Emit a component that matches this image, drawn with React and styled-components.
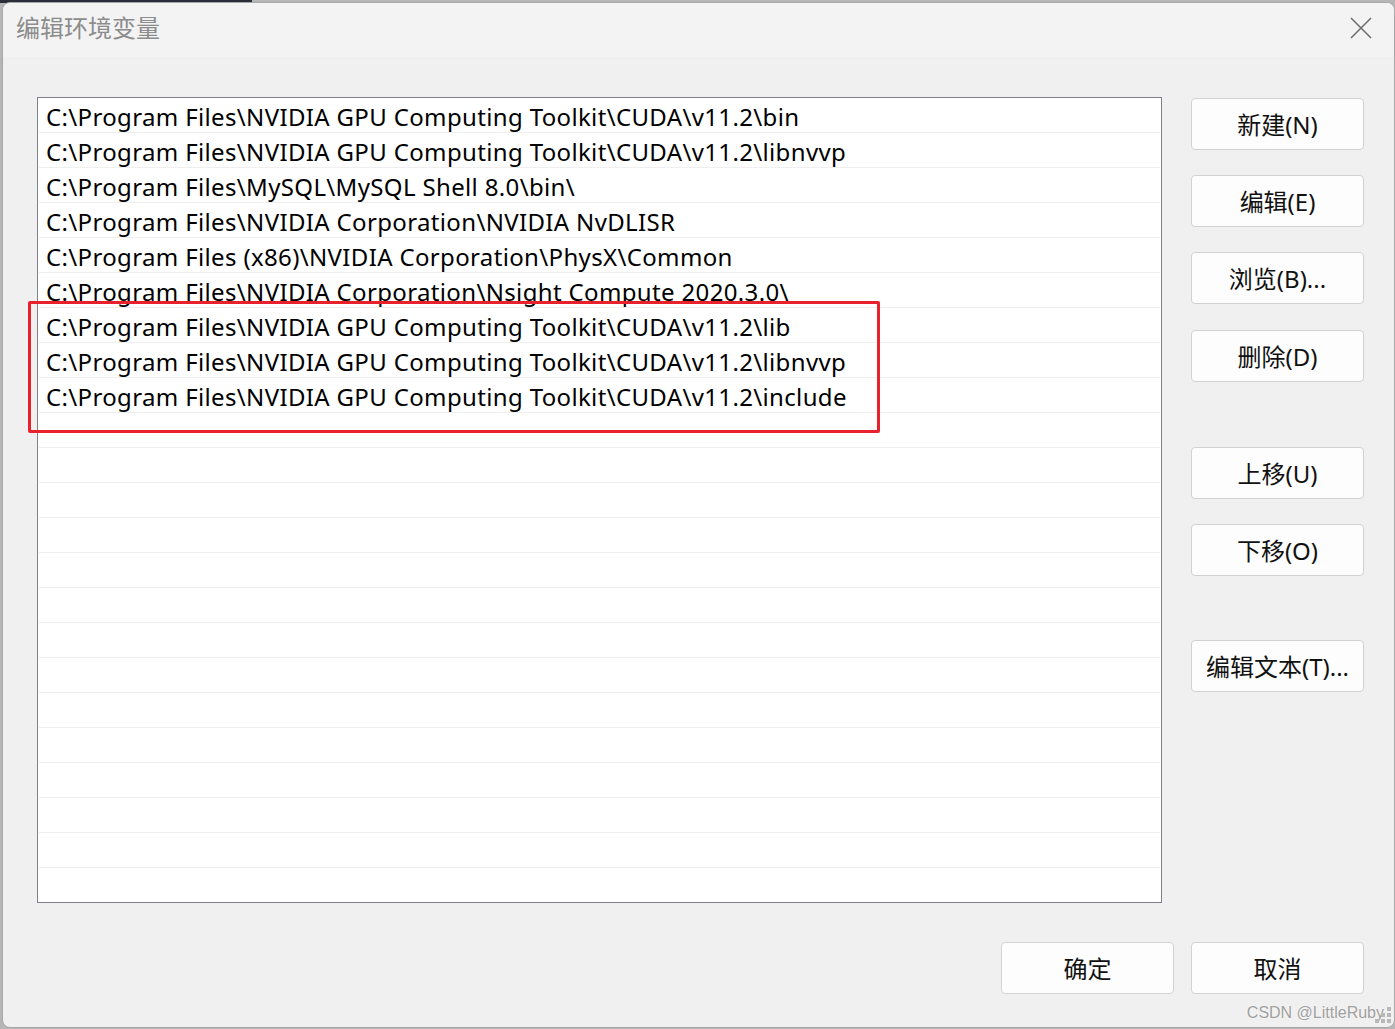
import React from "react";
import styled, { createGlobalStyle } from "styled-components";

const Global = createGlobalStyle`
  html, body { margin: 0; padding: 0; }
  body {
    width: 1395px;
    height: 1029px;
    overflow: hidden;
    background:
      linear-gradient(#2c2d3a, #2c2d3a) 0 0 / 252px 3px no-repeat,
      #b6b6b6;
    font-family: "Noto Sans", "Noto Sans CJK SC", sans-serif;
  }
`;

const Window = styled.div`
  position: relative;
  box-sizing: border-box;
  margin: 2px 0 0 2px;
  width: 1393px;
  height: 1026px;
  background: #f0f0f0;
  border: 1px solid #a8a8a8;
  border-radius: 8px;
  overflow: hidden;
  display: flex;
  flex-direction: column;
`;

const TitleBar = styled.div`
  height: 54px;
  flex: none;
  background: #f3f3f3;
  display: flex;
  align-items: center;
  justify-content: space-between;
  padding: 0 22px 0 13px;
`;

const Title = styled.div`
  font-family: "Noto Sans CJK SC", sans-serif;
  font-size: 24px;
  color: #8c8c8c;
  margin-top: -8px;
`;

const Close = styled.div`
  width: 22px;
  height: 22px;
  display: flex;
  margin-top: -4px;
`;

const Main = styled.div`
  display: flex;
  gap: 29px;
  padding: 40px 0 0 34px;
`;

const List = styled.div`
  box-sizing: border-box;
  width: 1125px;
  height: 806px;
  background: #fff;
  border: 1px solid #82828c;
  padding: 0 1px;
  overflow: hidden;
`;

const Row = styled.div`
  box-sizing: border-box;
  height: 35px;
  border-bottom: 1px solid #efefef;
  padding-left: 7px;
  padding-top: 3px;
  display: flex;
  align-items: center;
  font-size: 24px;
  color: #000;
  white-space: nowrap;
  letter-spacing: 0.35px;
  line-height: 1;
`;

const Side = styled.div`
  display: flex;
  flex-direction: column;
  padding-top: 1px;
`;

const Button = styled.div`
  box-sizing: border-box;
  width: 173px;
  height: 52px;
  flex: none;
  margin-top: ${(p) => p.$top || 0}px;
  background: #fdfdfd;
  border: 1px solid #d2d2d2;
  border-radius: 4px;
  display: flex;
  align-items: center;
  justify-content: center;
  font-size: 24px;
  color: #111;
  font-family: "Noto Sans", "Noto Sans CJK SC", sans-serif;
  white-space: nowrap;
  padding-bottom: 2px;
`;

const Footer = styled.div`
  display: flex;
  justify-content: flex-end;
  gap: 17px;
  padding: 0 30px 0 0;
  margin-top: 39px;
`;

const Highlight = styled.div`
  position: absolute;
  left: 25px;
  top: 298px;
  width: 852px;
  height: 132px;
  box-sizing: border-box;
  border: 3px solid #e8222c;
  border-radius: 2px;
  pointer-events: none;
`;

const Watermark = styled.div`
  position: absolute;
  right: 10px;
  bottom: 5px;
  font-family: "Liberation Sans", Arial, sans-serif;
  font-size: 16px;
  color: #a0a0a0;
  text-shadow: 0 0 2px #fff;
`;

const Grip = styled.svg`
  position: absolute;
  right: 2px;
  bottom: 3px;
`;

const paths = [
  "C:\\Program Files\\NVIDIA GPU Computing Toolkit\\CUDA\\v11.2\\bin",
  "C:\\Program Files\\NVIDIA GPU Computing Toolkit\\CUDA\\v11.2\\libnvvp",
  "C:\\Program Files\\MySQL\\MySQL Shell 8.0\\bin\\",
  "C:\\Program Files\\NVIDIA Corporation\\NVIDIA NvDLISR",
  "C:\\Program Files (x86)\\NVIDIA Corporation\\PhysX\\Common",
  "C:\\Program Files\\NVIDIA Corporation\\Nsight Compute 2020.3.0\\",
  "C:\\Program Files\\NVIDIA GPU Computing Toolkit\\CUDA\\v11.2\\lib",
  "C:\\Program Files\\NVIDIA GPU Computing Toolkit\\CUDA\\v11.2\\libnvvp",
  "C:\\Program Files\\NVIDIA GPU Computing Toolkit\\CUDA\\v11.2\\include",
];

const rows = [...paths, ...Array(14).fill("")];

const side = [
  { label: "新建(N)", top: 0 },
  { label: "编辑(E)", top: 25 },
  { label: "浏览(B)...", top: 25 },
  { label: "删除(D)", top: 26 },
  { label: "上移(U)", top: 65 },
  { label: "下移(O)", top: 25 },
  { label: "编辑文本(T)...", top: 64 },
];

export default function App() {
  return (
    <>
      <Global />
      <Window>
        <TitleBar>
          <Title>编辑环境变量</Title>
          <Close>
            <svg width="22" height="22" viewBox="0 0 22 22">
              <path d="M1 1L21 21M21 1L1 21" stroke="#6b6b6b" strokeWidth="1.5" fill="none" />
            </svg>
          </Close>
        </TitleBar>
        <Main>
          <List>
            {rows.map((r, i) => (
              <Row key={i}>{r}</Row>
            ))}
          </List>
          <Side>
            {side.map((b) => (
              <Button key={b.label} $top={b.top}>
                {b.label}
              </Button>
            ))}
          </Side>
        </Main>
        <Footer>
          <Button>确定</Button>
          <Button>取消</Button>
        </Footer>
        <Highlight />
        <Watermark>CSDN @LittleRuby</Watermark>
        <Grip width="18" height="18" viewBox="0 0 18 18">
          {[
            [13, 1], [13, 7], [7, 7], [13, 13], [7, 13], [1, 13],
          ].map(([x, y], i) => (
            <rect key={i} x={x} y={y} width="4" height="4" fill="#b8b8b8" />
          ))}
        </Grip>
      </Window>
    </>
  );
}
